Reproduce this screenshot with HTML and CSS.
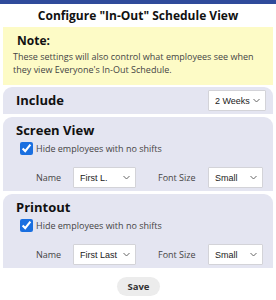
FILE: index.html
```html
<!DOCTYPE html>
<html lang="en">
<head>
    <meta charset="UTF-8">
    <title>Configure "In-Out" Schedule View</title>
    <link rel="stylesheet" href="styles.css">
</head>
<body>
    <div class="top-bar"></div>
    <h1 class="title">Configure "In-Out" Schedule View</h1>

    <!-- Note -->
    <div class="note">
        <h2>Note:</h2>
        <p>These settings will also control what employees see when they view Everyone's In-Out Schedule.</p>
    </div>

    <!-- Include -->
    <div class="section section-row">
        <h2>Include</h2>
        <span class="sel-wrap">
            <select class="sel sel-weeks"><option>2 Weeks</option></select>
            <svg class="chev" width="7" height="5" viewBox="0 0 7 5"><path d="M0.5 1 L3.5 4 L6.5 1" fill="none" stroke="#666" stroke-width="1"/></svg>
        </span>
    </div>

    <!-- Screen View -->
    <div class="section">
        <h2>Screen View</h2>
        <label class="check"><input type="checkbox" checked>Hide employees with no shifts</label>
        <div class="opts">
            <span class="opt-label lbl-name">Name</span>
            <span class="sel-wrap">
                <select class="sel sel-name"><option>First L.</option></select>
                <svg class="chev" width="7" height="5" viewBox="0 0 7 5"><path d="M0.5 1 L3.5 4 L6.5 1" fill="none" stroke="#666" stroke-width="1"/></svg>
            </span>
            <span class="opt-label lbl-size">Font Size</span>
            <span class="sel-wrap">
                <select class="sel sel-size"><option>Small</option></select>
                <svg class="chev" width="7" height="5" viewBox="0 0 7 5"><path d="M0.5 1 L3.5 4 L6.5 1" fill="none" stroke="#666" stroke-width="1"/></svg>
            </span>
        </div>
    </div>

    <!-- Printout -->
    <div class="section">
        <h2>Printout</h2>
        <label class="check"><input type="checkbox" checked>Hide employees with no shifts</label>
        <div class="opts">
            <span class="opt-label lbl-name">Name</span>
            <span class="sel-wrap">
                <select class="sel sel-name"><option>First Last</option></select>
                <svg class="chev" width="7" height="5" viewBox="0 0 7 5"><path d="M0.5 1 L3.5 4 L6.5 1" fill="none" stroke="#666" stroke-width="1"/></svg>
            </span>
            <span class="opt-label lbl-size">Font Size</span>
            <span class="sel-wrap">
                <select class="sel sel-size"><option>Small</option></select>
                <svg class="chev" width="7" height="5" viewBox="0 0 7 5"><path d="M0.5 1 L3.5 4 L6.5 1" fill="none" stroke="#666" stroke-width="1"/></svg>
            </span>
        </div>
    </div>

    <div class="actions">
        <button class="save-btn">Save</button>
    </div>
</body>
</html>
```

FILE: styles.css
```css
* {
    margin: 0;
    padding: 0;
    box-sizing: border-box;
}

body {
    width: 276px;
    background: #fff;
    font-family: 'Open Sans', sans-serif;
    color: #111;
}

.top-bar {
    height: 4px;
    background: #2f4b9b;
}

.title {
    font-size: 12px;
    font-weight: 700;
    text-align: center;
    line-height: 16px;
    margin-top: 4px;
}

/* Note */
.note {
    margin: 3px 3px 0;
    height: 58px;
    background: #fdfbc6;
    padding: 6px 12px 0 10px;
}

.note h2 {
    font-size: 12px;
    font-weight: 700;
    line-height: 15px;
    padding-left: 4px;
}

.note p {
    font-size: 9px;
    line-height: 13px;
    color: #444;
    margin-top: 2px;
}

/* Sections */
.section {
    margin: 3px 3px 0;
    background: #e4e5f1;
    border-top-left-radius: 9px;
    border-top-right-radius: 9px;
    padding: 5px 10px 3px 13px;
}

.section h2 {
    font-size: 13px;
    font-weight: 700;
    line-height: 17px;
}

.section-row {
    margin-top: 2px;
    display: flex;
    justify-content: space-between;
    align-items: center;
    height: 27px;
    padding: 0 7px 0 13px;
}

.check {
    display: flex;
    align-items: center;
    height: 13px;
    margin: 3px 0 0 4px;
    font-size: 9px;
    color: #444;
}

.check input {
    width: 13px;
    height: 13px;
    margin-right: 3px;
    accent-color: #1a6fe0;
}

.opts {
    display: flex;
    align-items: center;
    margin-top: 12px;
    padding-left: 20px;
}

.opt-label {
    font-size: 9px;
    color: #444;
}

.lbl-name {
    width: 37px;
}

.lbl-size {
    width: 50px;
    margin-left: 22px;
}

/* Selects */
.sel-wrap {
    position: relative;
    display: inline-block;
}

.sel {
    appearance: none;
    -webkit-appearance: none;
    display: block;
    font-family: 'Liberation Sans', Arial, sans-serif;
    font-size: 9px;
    color: #222;
    background: #fff;
    border: 1px solid #d3d3d8;
    border-radius: 1px;
    height: 21px;
    padding: 0 12px 0 6px;
}

.chev {
    position: absolute;
    right: 6px;
    top: 8px;
}

.sel-weeks {
    width: 58px;
}

.sel-name {
    width: 63px;
}

.sel-size {
    width: 55px;
}

.actions {
    text-align: center;
    padding-top: 5px;
}

.save-btn {
    font-family: 'Open Sans', sans-serif;
    font-weight: 700;
    font-size: 9.5px;
    color: #333;
    background: #ececec;
    border: none;
    border-radius: 10px;
    width: 43px;
    height: 19px;
    margin-left: 1px;
}
```
